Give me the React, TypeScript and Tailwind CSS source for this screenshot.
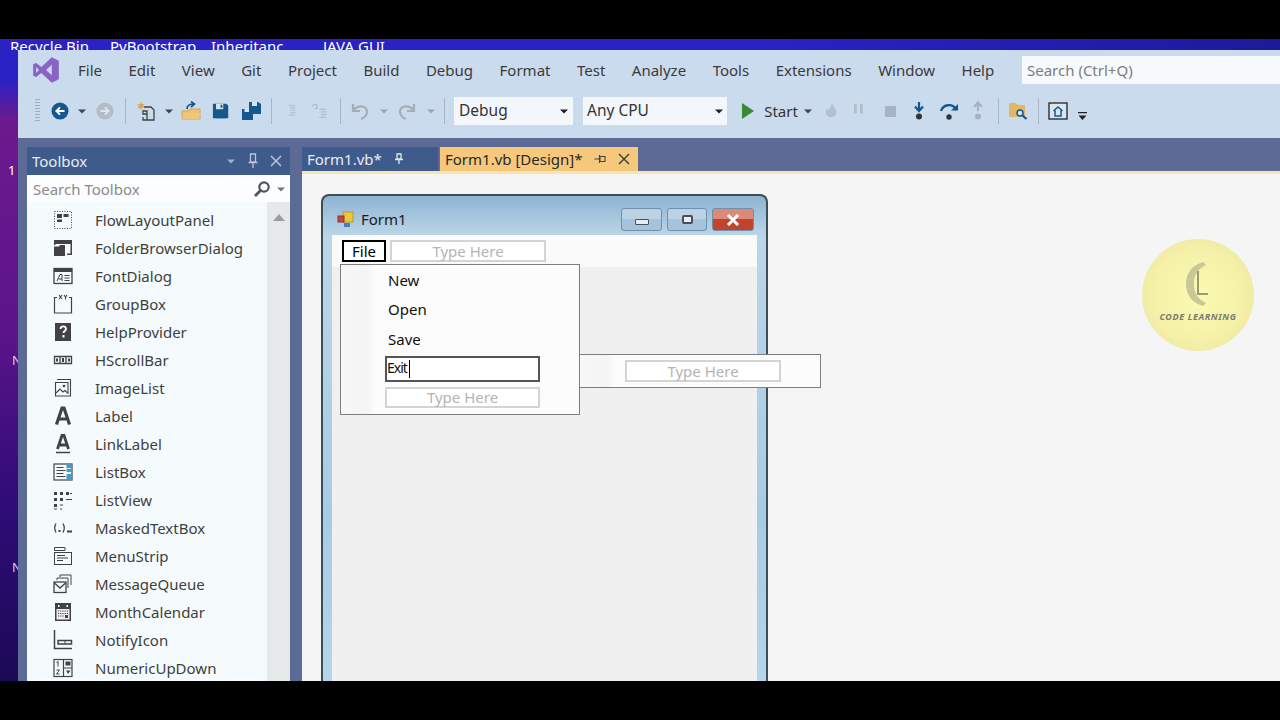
import React from 'react';

const MENU = ['File', 'Edit', 'View', 'Git', 'Project', 'Build', 'Debug', 'Format', 'Test', 'Analyze', 'Tools', 'Extensions', 'Window', 'Help'];

const Svg = ({ children, size = 20, box = 20 }: { children: React.ReactNode; size?: number; box?: number }) => (
  <svg width={size} height={size} viewBox={`0 0 ${box} ${box}`} fill="none">
    {children}
  </svg>
);

const Caret = ({ color = '#444' }: { color?: string }) => (
  <svg width="8" height="5" viewBox="0 0 8 5">
    <path d="M0 0.5h8L4 4.5z" fill={color} />
  </svg>
);

const Slot = ({ className, children }: { className: string; children?: React.ReactNode }) => (
  <div className={`flex items-center justify-center shrink-0 ${className}`}>{children}</div>
);

const Sep = ({ className }: { className: string }) => (
  <Slot className={className}>
    <div className="w-px h-[26px] bg-[#a9b6c6]" />
  </Slot>
);

const ink = '#424242';

// toolbox item icons
const ICONS: Record<string, React.ReactNode> = {
  FlowLayoutPanel: (
    <Svg>
      <rect x="1.5" y="1.5" width="17" height="17" stroke={ink} strokeDasharray="1 1.5" />
      <path d="M4 4h5v4H4zM10.5 4h5v3h-5zM4 9.5h5V12H4z" fill={ink} />
    </Svg>
  ),
  FolderBrowserDialog: (
    <Svg>
      <path d="M1 2h18v15h-5v-1.5h3.5V6H2.5v1H1z" fill={ink} />
      <path d="M1 8.5h5l1-1.5h5v11H1z" fill={ink} />
    </Svg>
  ),
  FontDialog: (
    <Svg>
      <rect x="1" y="2.5" width="18" height="15" stroke={ink} strokeWidth="1.3" />
      <path d="M1 3h18v3H1z" fill={ink} />
      <path d="M4 15l3-6.5h2V15M5.5 13H9" stroke={ink} />
      <path d="M11.5 9.5h5M11.5 12h5M11.5 14.5h5" stroke={ink} />
    </Svg>
  ),
  GroupBox: (
    <Svg>
      <path d="M4 3.5H1.5V19h17V3.5H16" stroke={ink} strokeWidth="1.2" />
      <path d="M6 1l3 4M9 1L6 5M11 1l1.5 2L14 1M12.5 3v2.5" stroke={ink} strokeWidth="1.1" />
    </Svg>
  ),
  HelpProvider: (
    <Svg>
      <rect x="2" y="1" width="16" height="18" fill={ink} />
      <path d="M7.5 7c0-3.5 5.5-3.5 5.5 0 0 2-2.5 2-2.5 4" stroke="#fff" strokeWidth="1.8" />
      <rect x="9.5" y="13" width="2" height="2.5" fill="#fff" />
    </Svg>
  ),
  HScrollBar: (
    <Svg>
      <path d="M1.5 6.5h17v7h-17z" stroke={ink} strokeWidth="1.3" />
      <path d="M7 6.5v7M13 6.5v7" stroke={ink} strokeWidth="1.3" />
      <path d="M3 8.5h2v3H3zM15 8.5h2v3h-2zM9 8h2v4H9z" fill={ink} />
    </Svg>
  ),
  ImageList: (
    <Svg>
      <path d="M4 1.5h13.5V18H2.5V4.5H15V16" stroke={ink} strokeWidth="1.1" />
      <circle cx="11" cy="8" r="1.3" fill={ink} />
      <path d="M3 15l4-4 3 3 2-1.5 2.5 2.5" stroke={ink} strokeWidth="1.1" />
    </Svg>
  ),
  Label: (
    <Svg>
      <path d="M3.5 18.5L9 2h2l5.5 16.5M6 13h8" stroke={ink} strokeWidth="3.2" />
    </Svg>
  ),
  LinkLabel: (
    <Svg>
      <path d="M4.5 15L9 1.5h2L15.5 15M6 11h8" stroke={ink} strokeWidth="2.8" />
      <path d="M3 18.5h14" stroke={ink} strokeWidth="1.5" />
    </Svg>
  ),
  ListBox: (
    <Svg>
      <rect x="1" y="2" width="18" height="16" stroke={ink} strokeWidth="1.2" />
      <path d="M3.5 5.5h7M3.5 8.5h9M3.5 11.5h7M3.5 14.5h9" stroke={ink} strokeWidth="1.2" />
      <path d="M13.5 2.5H19V6h-5.5zM13.5 6.8H19V10h-5.5zM13.5 12H19v5.5h-5.5z" fill="#3f9fcf" />
    </Svg>
  ),
  ListView: (
    <Svg>
      <path d="M1 2h3v3H1zM7 2h3v3H7zM13 2h3v3h-3zM1 8h3v3H1zM7 8h3v3H7zM1 14h3v3H1z" fill={ink} />
      <path d="M17 3.5h2M13 9.5h6M7 15h3M1 19h3M7 19h2" stroke={ink} />
    </Svg>
  ),
  MaskedTextBox: (
    <Svg>
      <path d="M3 5.5C1 9 1 11 3 14.5M10 5.5c2 3.5 2 5.5 0 9" stroke={ink} strokeWidth="1.3" />
      <path d="M5.5 12h2v2h-2zM14 12.5h5v2h-5z" fill={ink} />
    </Svg>
  ),
  MenuStrip: (
    <Svg>
      <path d="M1.5 1.5H12v3H1.5z" stroke={ink} />
      <rect x="1.5" y="6.5" width="17" height="12" stroke={ink} />
      <path d="M4 9.5h8M4 12h11M4 14.5h6" stroke={ink} />
    </Svg>
  ),
  MessageQueue: (
    <Svg>
      <rect x="1" y="8" width="12" height="10.5" stroke={ink} strokeWidth="1.3" />
      <path d="M1.5 9L7 14l5.5-5" stroke={ink} strokeWidth="1.3" />
      <path d="M4 6V4h11v10M7 3V1h11v10" stroke={ink} />
    </Svg>
  ),
  MonthCalendar: (
    <Svg>
      <rect x="2" y="1" width="16" height="18" fill={ink} />
      <path d="M3.5 7h13v10.5h-13z" fill="#eee" />
      <path d="M5 3h1.5v2H5zM13.5 3H15v2h-1.5z" fill="#fff" />
      <path d="M5 9h10M5 11.5h10M5 14h6" stroke={ink} strokeDasharray="1.2 1" />
      <rect x="12" y="13" width="3" height="3" fill={ink} />
    </Svg>
  ),
  NotifyIcon: (
    <Svg>
      <path d="M1.5 0v18.5H19" stroke={ink} strokeWidth="1.5" />
      <path d="M5 10.5h13.5V14H5z" stroke={ink} strokeWidth="1.5" />
      <path d="M12 10.5V14" stroke={ink} />
    </Svg>
  ),
  NumericUpDown: (
    <Svg>
      <rect x="1" y="1.5" width="18" height="17" stroke={ink} strokeWidth="1.2" />
      <path d="M10.5 1.5v17M10.5 10H19" stroke={ink} strokeWidth="1.2" />
      <path d="M5 3.5v5M3.5 4.5l1.5-1M3.5 12h3l-3 4h3" stroke={ink} />
      <path d="M12.5 3.5h5v4h-5zM13 12.5h4.5L15 16z" fill={ink} />
    </Svg>
  ),
};

const TOOLS = Object.keys(ICONS);

const TypeHere = ({ className }: { className: string }) => (
  <div className={`flex items-center justify-center bg-white border-2 border-[#d4d4d4] text-[#b4b4b4] text-[15px] ${className}`}>
    Type Here
  </div>
);

const Toolbar = () => (
  <div className="h-[48px] pl-[17px] pb-[6px] flex items-center text-[#333]">
    <Slot className="w-[5px] h-[24px] bg-[repeating-linear-gradient(#9fadc0_0_1px,transparent_1px_3px)]" />
    <div className="w-[10px]" />
    <Slot className="w-[20px]">
      <Svg size={18}>
        <circle cx="10" cy="10" r="9.5" fill="#14588e" />
        <path d="M15 10H7M10 6l-4 4 4 4" stroke="#fff" strokeWidth="2.2" />
      </Svg>
    </Slot>
    <Slot className="w-[24px]"><Caret /></Slot>
    <Slot className="w-[22px]">
      <Svg size={18}>
        <circle cx="10" cy="10" r="9.5" fill="#b3bcc6" />
        <path d="M5 10h8M10 6l4 4-4 4" stroke="#dfe5ec" strokeWidth="2.2" />
      </Svg>
    </Slot>
    <Sep className="w-[18px]" />
    <Slot className="w-[24px]">
      <Svg size={20}>
        <path d="M8 6h7l3 3v10H7v-3" stroke={ink} strokeWidth="1.3" />
        <path d="M11 13H7v-3h4zM11 19v-6" stroke={ink} strokeWidth="1.3" />
        <path d="M5 0.5l1 3 3-1-2 2.5 2 2.5-3-1-1 3-1-3-3 1 2-2.5-2-2.5 3 1z" fill="#d9a441" />
      </Svg>
    </Slot>
    <Slot className="w-[22px]"><Caret /></Slot>
    <Slot className="w-[22px]">
      <Svg size={20}>
        <path d="M1 10h6l2-2h10v10H1z" fill="#e9c478" stroke="#d9a441" />
        <path d="M1 18l3-6h16l-2 6z" fill="#eec77a" />
        <path d="M6 8c0-4 3-5 7-5M10 0.5L13.5 3 10 6" stroke="#14588e" strokeWidth="1.7" />
      </Svg>
    </Slot>
    <Slot className="w-[38px]">
      <Svg size={18}>
        <path d="M1 2h15l2 2v14H1z" fill="#14588e" />
        <path d="M4.5 2h8v6h-8z" fill="#dbe5f0" />
        <path d="M9.5 3h2v3.5h-2zM4 12h11v6H4z" fill="#14588e" />
      </Svg>
    </Slot>
    <Slot className="w-[22px]">
      <Svg size={20}>
        <path d="M8 1h9l3 2v10H8z" fill="#14588e" />
        <path d="M11 1h5v4h-5z" fill="#dbe5f0" />
        <path d="M1 8h9l2 2v9H1z" fill="#14588e" />
        <path d="M3.5 8H8v3H3.5z" fill="#dbe5f0" />
      </Svg>
    </Slot>
    <Sep className="w-[18px]" />
    <Slot className="w-[24px]">
      <Svg size={16}>
        <path d="M6 3h8M8 6h6M8 9h6M8 12h6M6 15h8" stroke="#a8b3c0" />
      </Svg>
    </Slot>
    <Slot className="w-[32px]">
      <Svg size={18}>
        <path d="M2 5c0-3 5-3 5 0 0 2-2 2-3 3" stroke="#a8b3c0" strokeWidth="1.3" />
        <path d="M9 8h8M11 11h6M11 14h6M9 17h8" stroke="#a8b3c0" />
      </Svg>
    </Slot>
    <Sep className="w-[8px]" />
    <Slot className="w-[32px]">
      <Svg size={20}>
        <path d="M3 3v7h7" stroke="#a3aebb" strokeWidth="2.2" />
        <path d="M3.5 9.5C7 4 16 4 17 10c.5 4-3 7-6 8" stroke="#a3aebb" strokeWidth="2.2" />
      </Svg>
    </Slot>
    <Slot className="w-[16px]"><Caret color="#9aa5b2" /></Slot>
    <Slot className="w-[30px]">
      <Svg size={20}>
        <path d="M17 3v7h-7" stroke="#a3aebb" strokeWidth="2.2" />
        <path d="M16.5 9.5C13 4 4 4 3 10c-.5 4 3 7 6 8" stroke="#a3aebb" strokeWidth="2.2" />
      </Svg>
    </Slot>
    <Slot className="w-[18px]"><Caret color="#9aa5b2" /></Slot>
    <Sep className="w-[8px]" />
    <div className="w-[6px]" />
    <div className="w-[119px] h-[28px] bg-[#f3f7fb] flex items-center justify-between px-[5px] shrink-0 text-[15.5px]">
      Debug
      <Caret color="#222" />
    </div>
    <div className="w-[10px]" />
    <div className="w-[144px] h-[28px] bg-[#f3f7fb] flex items-center justify-between px-[4px] shrink-0 text-[15.5px]">
      Any CPU
      <Caret color="#222" />
    </div>
    <div className="w-[11px]" />
    <Slot className="w-[20px]">
      <svg width="12" height="16" viewBox="0 0 12 16">
        <path d="M0 0l12 8-12 8z" fill="#388a34" />
      </svg>
    </Slot>
    <Slot className="w-[32px] ml-[7px] text-[15px]">Start</Slot>
    <Slot className="w-[22px]"><Caret /></Slot>
    <Slot className="w-[26px]">
      <Svg size={18}>
        <path d="M10 1c1 4 5 6 5 10a6 6 0 0 1-12 0c0-2 1-3 2-4 0 2 1 2 1 2 2-3 3-5 4-8z" fill="#b5c0cd" />
      </Svg>
    </Slot>
    <Slot className="w-[30px]">
      <Svg size={16}>
        <path d="M2.5 1H6v12H2.5zM10 1h3.5v12H10z" fill="#b3bdca" />
      </Svg>
    </Slot>
    <Slot className="w-[30px]">
      <div className="w-[11px] h-[11px] bg-[#a9b4c2]" />
    </Slot>
    <Slot className="w-[28px]">
      <Svg size={20}>
        <path d="M10 1v8M6 5.5L10 10l4-4.5" stroke="#14588e" strokeWidth="2.2" />
        <circle cx="10" cy="15.5" r="3" fill="#333" />
      </Svg>
    </Slot>
    <Slot className="w-[32px]">
      <Svg size={20}>
        <path d="M2 10c2-7 12-8 15-1" stroke="#14588e" strokeWidth="2.3" />
        <path d="M12 9.5h7V3" fill="#14588e" />
        <circle cx="10" cy="16" r="2.7" fill="#333" />
      </Svg>
    </Slot>
    <Slot className="w-[26px]">
      <Svg size={20}>
        <path d="M10 10V2M6 6l4-4.5L14 6" stroke="#a8b3c0" strokeWidth="2.2" />
        <circle cx="10" cy="15.5" r="3" fill="#a8b3c0" />
      </Svg>
    </Slot>
    <Sep className="w-[14px]" />
    <Slot className="w-[26px]">
      <Svg size={20}>
        <path d="M1 2h7l2 2h7v12H1z" fill="#e3b666" />
        <circle cx="12" cy="12" r="3" fill="#dbe5f0" stroke="#14588e" strokeWidth="1.5" />
        <path d="M14 14l4.5 4" stroke="#14588e" strokeWidth="2.2" />
      </Svg>
    </Slot>
    <Sep className="w-[14px]" />
    <Slot className="w-[26px]">
      <Svg size={20}>
        <rect x="1" y="2" width="18" height="16" stroke="#222" strokeWidth="1.3" fill="#dbe5f0" />
        <path d="M5.5 10L10 6l4.5 4M7 9.5V15h6V9.5" stroke="#14588e" strokeWidth="1.5" />
      </Svg>
    </Slot>
    <Slot className="w-[22px] pt-[10px]">
      <svg width="9" height="8" viewBox="0 0 9 8">
        <path d="M0 0h9v1.3H0zM0.5 3.5h8L4.5 8z" fill="#222" />
      </svg>
    </Slot>
  </div>
);

const ToolboxPanel = () => (
  <div className="w-[263px] shrink-0 flex flex-col">
    <div className="h-[28px] bg-[#3f5b8c] flex items-center pl-[5px] pr-[8px] text-[#e6edf5] text-[15px]">
      <span className="flex-1">Toolbox</span>
      <Caret color="#9fb0c9" />
      <svg className="ml-[13px]" width="10" height="16" viewBox="0 0 10 16" fill="none">
        <path d="M2.5 1h5v8h-5zM0.5 9.5h9M5 9.5V15" stroke="#b9c6da" strokeWidth="1.3" />
      </svg>
      <svg className="ml-[12px]" width="12" height="12" viewBox="0 0 12 12">
        <path d="M1 1l10 10M11 1L1 11" stroke="#b9c6da" strokeWidth="1.5" />
      </svg>
    </div>
    <div className="h-[27px] bg-[#fbfdfe] flex items-center pl-[6px] pr-[5px] pt-px text-[15px] text-[#8b8b8b]">
      <span className="flex-1">Search Toolbox</span>
      <svg width="18" height="18" viewBox="0 0 18 18" fill="none">
        <circle cx="11" cy="7" r="4.7" stroke="#555" strokeWidth="2.2" />
        <path d="M7.5 10.5L2 16" stroke="#555" strokeWidth="2.8" />
      </svg>
      <div className="ml-[6px]"><Caret color="#777" /></div>
    </div>
    <div className="flex-1 flex overflow-hidden">
      <div className="flex-1 bg-[#f5fbfc] pt-[4px] overflow-hidden">
        {TOOLS.map((t) => (
          <div key={t} className="h-[28px] flex items-center text-[15px] text-[#3f3f3f]">
            <div className="w-[68px] pl-[26px] shrink-0 flex">{ICONS[t]}</div>
            {t}
          </div>
        ))}
      </div>
      <div className="w-[23px] bg-[#e6e9ea] flex justify-center pt-[12px]">
        <svg width="12" height="7" viewBox="0 0 12 7">
          <path d="M6 0l6 7H0z" fill="#9a9da0" />
        </svg>
      </div>
    </div>
  </div>
);

const CaptionButton = ({ className, children }: { className: string; children: React.ReactNode }) => (
  <div className={`h-[23px] rounded-[3px] border border-[#6f8fab] flex items-center justify-center ${className}`}>{children}</div>
);

const FormWindow = () => (
  <div className="relative ml-[19px] mt-[20px] w-[447px] flex-1 rounded-t-[8px] border-2 border-b-0 border-[#3e4e55] bg-[linear-gradient(#8eb4d2_0px,#bcd6e8_40px,#a6cce4_320px,#b5d5ea_100%)] flex flex-col px-[9px]">
    <div className="h-[39px] shrink-0 flex items-center pl-[5px] pr-[3px] pt-[8px]">
      <svg width="17" height="17" viewBox="0 0 17 17">
        <rect x="6" y="1" width="10" height="10" fill="#e8c93c" stroke="#b79a2c" />
        <rect x="1" y="5" width="6" height="6" fill="#c8443a" stroke="#8e2f28" />
        <rect x="7" y="12" width="6" height="4" fill="#4a7cc0" />
      </svg>
      <span className="ml-[7px] text-[15px] text-[#1a1a1a] flex-1">Form1</span>
      <CaptionButton className="w-[41px] bg-[linear-gradient(#bcd3e5_50%,#a5c3da_50%)]">
        <div className="w-[14px] h-[6px] mt-[5px] rounded-[1px] border border-[#4a4f55] bg-[#e8eef3]" />
      </CaptionButton>
      <CaptionButton className="w-[40px] ml-[5px] bg-[linear-gradient(#bcd3e5_50%,#a5c3da_50%)]">
        <div className="w-[11px] h-[9px] rounded-[2px] border-2 border-[#4a4f55] bg-[#e8eef3]" />
      </CaptionButton>
      <CaptionButton className="w-[42px] ml-[5px] border-[#6e2a20] bg-[linear-gradient(#d98a78_50%,#c2442f_50%)]">
        <svg width="14" height="12" viewBox="0 0 14 12">
          <path d="M2 1l10 10M12 1L2 11" stroke="#fff" strokeWidth="3" />
        </svg>
      </CaptionButton>
    </div>
    <div className="flex-1 bg-[#f0f0f0] flex flex-col">
      <div className="h-[32px] bg-[#fafafa] flex items-start pt-[5px] pl-[10px]">
        <div className="w-[44px] h-[22px] bg-white border-2 border-black flex items-center justify-center text-[15px] text-black">File</div>
        <TypeHere className="w-[156px] h-[22px] ml-[4px]" />
      </div>
    </div>

    {/* menu drop down, sits over the form */}
    <div className="absolute left-[17px] top-[68px] w-[240px] h-[151px] bg-[linear-gradient(90deg,#f8f8f8_0,#f4f4f4_26px,#fcfcfc_34px)] border border-[#7e7e7e] pl-[44px] text-[15px] text-[#111] z-10">
      <div className="h-[29.5px] flex items-center pl-[3px]">New</div>
      <div className="h-[29.5px] flex items-center pl-[3px]">Open</div>
      <div className="h-[29.5px] flex items-center pl-[3px]">Save</div>
      <div className="w-[155px] h-[26px] mt-[2.5px] pb-[3px] bg-white border-2 border-[#555] flex items-center text-[14px] tracking-[-1px]">
        Exit<span className="w-px h-[18px] ml-[2px] mt-[3px] bg-black" />
      </div>
      <TypeHere className="w-[155px] h-[21px] mt-[5px]" />
    </div>
    <div className="absolute left-[257px] top-[158px] w-[241px] h-[34px] bg-[linear-gradient(90deg,#f8f8f8_0,#f4f4f4_26px,#fcfcfc_34px)] border border-[#7e7e7e] border-l-0 flex items-center pl-[45px] z-10">
      <TypeHere className="w-[156px] h-[22px]" />
    </div>
  </div>
);

const Watermark = () => (
  <div className="absolute left-[840px] top-[65px] w-[112px] h-[112px] rounded-full bg-[radial-gradient(circle,#fbfbb0_0%,#f4f0a8_60%,#e8e2a0_100%)] flex flex-col items-center">
    <svg className="mt-[22px]" width="24" height="46" viewBox="0 0 24 46" fill="none">
      <path d="M17 1C4 5 0 14 0 23s4 18 17 22l3-3C10 37 8 30 8 23S10 9 20 4z" fill="#c9c998" />
      <path d="M12 10v23h10" stroke="#9a9a78" strokeWidth="2" />
    </svg>
    <span className="mt-[3px] text-[9px] font-bold italic tracking-[0.6px] text-[#7c7c72]">CODE LEARNING</span>
  </div>
);

const EditorArea = () => (
  <div className="flex-1 flex flex-col min-w-0">
    <div className="h-[24px] flex items-stretch shrink-0">
      <div className="w-[136px] bg-[#3f5b8c] flex items-center pl-[5px] text-[15px] text-[#e6edf5]">
        Form1.vb*
        <svg className="ml-[12px]" width="10" height="12" viewBox="0 0 10 12" fill="none">
          <path d="M3 1h4v5H3zM1 6.5h8M5 6.5V11" stroke="#dfe7f1" strokeWidth="1.3" />
        </svg>
      </div>
      <div className="ml-[2px] w-[198px] bg-[#f5c87c] flex items-center pl-[5px] text-[15px] text-[#2a2a2a]">
        Form1.vb [Design]*
        <svg className="ml-[11px]" width="12" height="10" viewBox="0 0 12 10" fill="none">
          <path d="M6 2.5h5v5H6zM5.5 1v8M5.5 5H0.5" stroke="#444" strokeWidth="1.1" />
        </svg>
        <svg className="ml-[12px]" width="12" height="12" viewBox="0 0 12 12">
          <path d="M1 1l10 10M11 1L1 11" stroke="#444" strokeWidth="1.5" />
        </svg>
      </div>
    </div>
    <div className="h-[3px] bg-[#f8e3b4] shrink-0" />
    <div className="relative flex-1 bg-[#f5f5f5] flex flex-col overflow-visible">
      <FormWindow />
      <Watermark />
    </div>
  </div>
);

export default function App() {
  return (
    <div className="w-[1280px] h-[720px] bg-black flex flex-col overflow-hidden font-['Noto_Sans',sans-serif]">
      <div className="h-[39px] shrink-0" />
      <div className="h-[642px] flex flex-col">
        {/* desktop peeking out behind the VS window */}
        <div className="h-[11px] shrink-0 overflow-hidden flex bg-[linear-gradient(90deg,#2a22c4,#2a22c4_60%,#1d1a9a)] text-white text-[15px] leading-[15px] pl-[10px]">
          <span className="w-[100px] shrink-0">Recycle Bin</span>
          <span className="w-[101px] shrink-0">PyBootstrap</span>
          <span className="w-[112px] shrink-0">Inheritanc</span>
          <span>JAVA GUI</span>
        </div>
        <div className="flex-1 flex min-h-0">
          <div className="w-[18px] shrink-0 overflow-hidden bg-[linear-gradient(#2a22c4_0,#2a22c4_30px,#6c1a8e_70px,#5c148a_280px,#2f0c78_450px,#1c0a55_100%)] flex flex-col pl-[8px] text-white text-[13px] leading-[18px] pt-[111px]">
            <span>1</span>
            <span className="ml-[4px] mt-[172px] text-[#cfcfe0]">N</span>
            <span className="ml-[4px] mt-[189px] text-[#cfcfe0]">N</span>
          </div>
          <div className="flex-1 flex flex-col min-w-0">
            <div className="h-[40px] bg-[#cbdbee] shrink-0 flex items-center pl-[14px] text-[15px] text-[#3a3a3a]">
              <svg width="28" height="28" viewBox="0 0 24 24">
                <path
                  fillRule="evenodd"
                  d="M17 1l6 3v16l-6 3-9-8.5-4.5 3.5L1 17V7l2.5-1L8 9.5zM17 7.5L12 12l5 4.5zM3.5 9.5v5L6 12z"
                  fill="#8a63c6"
                />
              </svg>
              <div className="flex items-center gap-[26.5px] ml-[18px] flex-1">
                {MENU.map((m) => (
                  <span key={m}>{m}</span>
                ))}
              </div>
              <div className="w-[258px] h-[28px] bg-[#f7fafd] flex items-center pl-[5px] text-[#7c7c7c]">Search (Ctrl+Q)</div>
            </div>
            <div className="bg-[#cbdbee] shrink-0"><Toolbar /></div>
            <div className="flex-1 min-h-0 bg-[#5b6b95] flex pl-[9px] pt-[9px] gap-[12px]">
              <ToolboxPanel />
              <EditorArea />
            </div>
          </div>
        </div>
      </div>
      <div className="h-[39px] shrink-0" />
    </div>
  );
}
